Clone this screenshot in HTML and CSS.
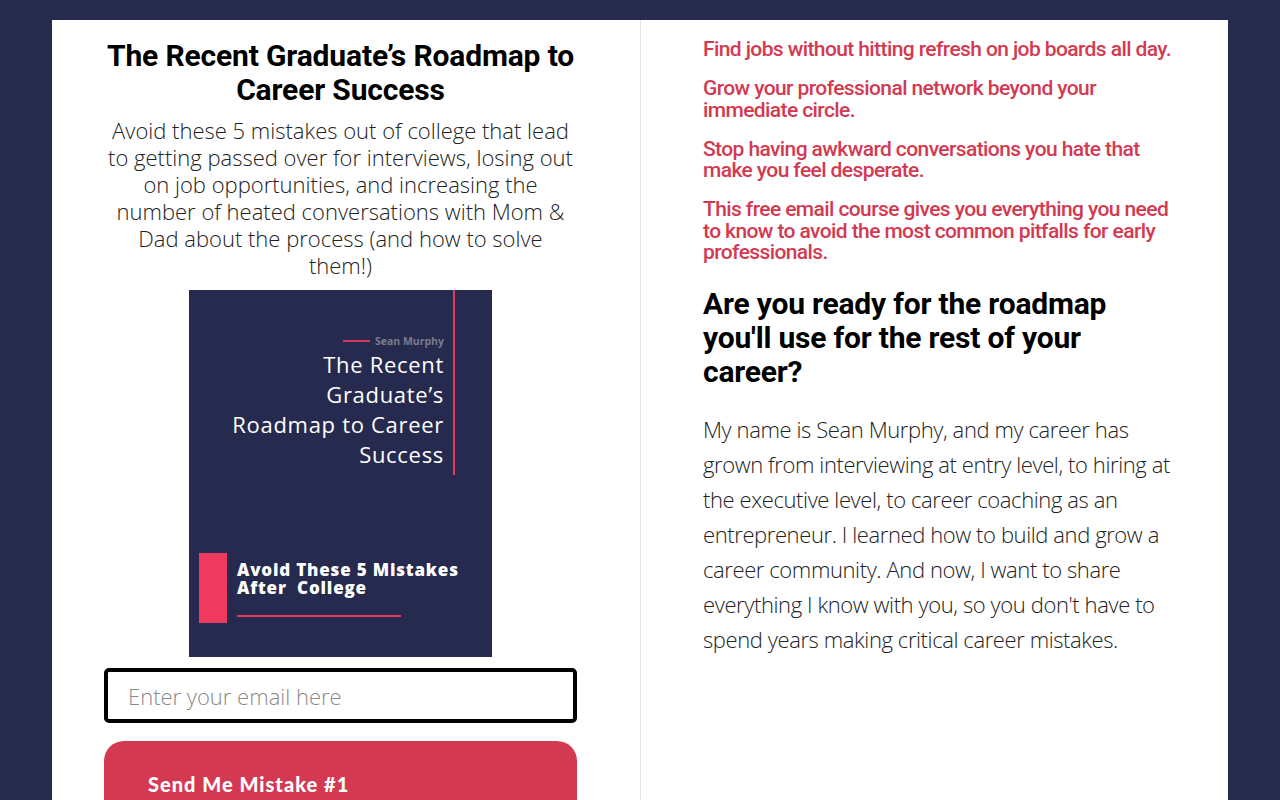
FILE: index.html
```html
<!DOCTYPE html>
<html>
<head>
<meta charset="utf-8">
<link rel="stylesheet" href="styles.css">
</head>
<body>
<div class="card">
  <section class="col left">
    <h1 class="title">The Recent Graduate’s Roadmap to Career Success</h1>
    <p class="sub">Avoid these 5 mistakes out of college that lead to getting passed over for interviews, losing out on job opportunities, and increasing the number of heated conversations with Mom &amp; Dad about the process (and how to solve them!)</p>
    <div class="book">
      <div class="book-top">
        <div class="book-head">
          <div class="author"><span class="dash"></span>Sean Murphy</div>
          <div class="book-title">The Recent<br>Graduate’s<br>Roadmap to Career<br>Success</div>
        </div>
      </div>
      <div class="book-bottom">
        <div class="block"></div>
        <div class="bb-text">
          <div class="bb-title">Avoid These 5 Mistakes<br>After&nbsp; College</div>
          <div class="bb-line"></div>
        </div>
      </div>
    </div>
    <input class="email" type="text" placeholder="Enter your email here">
    <button class="btn">Send Me Mistake #1</button>
  </section>
  <section class="col right">
    <p class="red">Find jobs without hitting refresh on job boards all day.</p>
    <p class="red">Grow your professional network beyond your immediate circle.</p>
    <p class="red">Stop having awkward conversations you hate that make you feel desperate.</p>
    <p class="red">This free email course gives you everything you need to know to avoid the most common pitfalls for early professionals.</p>
    <h2 class="q">Are you ready for the roadmap you'll use for the rest of your career?</h2>
    <p class="body">My name is Sean Murphy, and my career has grown from interviewing at entry level, to hiring at the executive level, to career coaching as an entrepreneur. I learned how to build and grow a career community. And now, I want to share everything I know with you, so you don't have to spend years making critical career mistakes.</p>
  </section>
</div>
</body>
</html>
```

FILE: styles.css
```css
html, body {
  margin: 0;
  padding: 0;
  background: #262a4d;
  height: 800px;
  overflow: hidden;
}
.card {
  margin: 20px 52px 0;
  background: #fff;
  display: flex;
  height: 780px;
  overflow: hidden;
}
.col {
  width: 473px;
  box-sizing: content-box;
}
.left {
  padding: 19px 63px 0 52px;
  border-right: 1px solid #e4e4e4;
  display: flex;
  flex-direction: column;
  align-items: center;
}
.right {
  padding: 19px 52px 0 62px;
}
.title {
  margin: 0;
  font-family: Roboto, sans-serif;
  font-weight: 700;
  font-size: 30px;
  line-height: 34px;
  text-align: center;
  color: #000;
  letter-spacing: -0.15px;
}
.sub {
  margin: 10px 0 0;
  font-family: "Open Sans", sans-serif;
  font-weight: 300;
  font-size: 22px;
  line-height: 27px;
  text-align: center;
  color: #222;
}
.book {
  margin-top: 11px;
  width: 303px;
  height: 367px;
  flex-shrink: 0;
  background: #262a4e;
  display: flex;
  flex-direction: column;
  font-family: "Open Sans", sans-serif;
}
.book-top {
  display: flex;
  justify-content: flex-end;
  padding-right: 37px;
}
.book-head {
  height: 185px;
  border-right: 2px solid #e23b5a;
  padding: 43px 9px 0 0;
  box-sizing: border-box;
  text-align: right;
  width: 250px;
}
.author {
  font-size: 10.5px;
  font-weight: 700;
  color: #7a7c90;
  line-height: 16px;
  display: flex;
  justify-content: flex-end;
  align-items: center;
}
.dash {
  display: inline-block;
  width: 27px;
  height: 2px;
  background: #d5375a;
  margin-right: 5px;
}
.book-title {
  color: #fff;
  font-size: 22px;
  line-height: 30px;
  font-weight: 400;
  letter-spacing: 0.7px;
  white-space: nowrap;
}
.book-bottom {
  display: flex;
  padding-left: 10px;
  margin-top: 78px;
}
.block {
  width: 28px;
  height: 70px;
  background: #ee3a5e;
}
.bb-text {
  margin-left: 10px;
  padding-top: 8px;
}
.bb-title {
  color: #fff;
  font-weight: 800;
  font-size: 17px;
  line-height: 18px;
  letter-spacing: 0.8px;
  white-space: nowrap;
}
.bb-line {
  width: 164px;
  height: 2px;
  background: #e23b5a;
  margin-top: 18px;
}
.email {
  margin-top: 11px;
  width: 473px;
  height: 55px;
  flex-shrink: 0;
  box-sizing: border-box;
  border: 4px solid #000;
  border-radius: 5px;
  padding: 0 20px;
  font-family: "Open Sans", sans-serif;
  font-weight: 300;
  font-size: 22px;
  color: #333;
  outline: none;
}
.email::placeholder {
  color: #8a8a8a;
}
.btn {
  margin-top: 18px;
  width: 473px;
  height: 100px;
  flex-shrink: 0;
  border: none;
  border-radius: 20px;
  background: #d33a51;
  color: #fff;
  font-family: Lato, sans-serif;
  font-weight: 900;
  font-size: 20px;
  line-height: 24px;
  letter-spacing: 1px;
  text-align: left;
  padding: 31px 0 0 44px;
  display: flex;
  align-items: flex-start;
  box-sizing: border-box;
}
.red {
  margin: 0 0 17.5px;
  font-family: Roboto, sans-serif;
  font-weight: 500;
  font-size: 21px;
  line-height: 21.5px;
  color: #d33a51;
  letter-spacing: -0.6px;
}
.q {
  margin: 23px 0 0;
  font-family: Roboto, sans-serif;
  font-weight: 700;
  font-size: 30px;
  line-height: 34px;
  color: #000;
  letter-spacing: -0.2px;
}
.body {
  margin: 23.5px 0 0;
  font-family: "Open Sans", sans-serif;
  font-weight: 300;
  font-size: 22px;
  line-height: 35px;
  color: #222;
  letter-spacing: -0.4px;
}
```
